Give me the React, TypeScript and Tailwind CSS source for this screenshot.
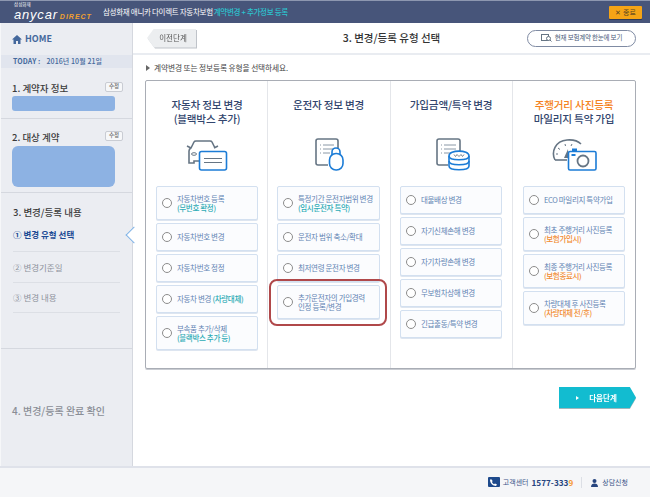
const FONT = "font-['Noto_Sans_CJK_KR','Noto_Sans',sans-serif]";

type Opt = { a: string; b?: string; inline?: string; h: string; tone?: string; highlight?: boolean };

const teal = "text-[#2cabb5]";
const orange = "text-[#f28b2e]";

function Option({ o }: { o: Opt }) {
  return (
    <div className={`relative flex items-center gap-[5px] rounded-[2px] border border-[#d3e0f0] bg-[#fbfcfe] pl-[5px] shadow-[0_1px_0_#dde5f0] ${o.h}`}>
      <span className="h-[10px] w-[10px] shrink-0 rounded-full border border-[#8c8c8c] bg-white" />
      <div className="text-[7.5px] leading-[9.5px] tracking-[-0.35px] text-[#5f83b3]">
        <div className="whitespace-nowrap">
          {o.a}
          {o.inline && <span className={`font-medium ${teal}`}> {o.inline}</span>}
        </div>
        {o.b && <div className={`whitespace-nowrap font-medium ${o.tone ?? teal}`}>{o.b}</div>}
      </div>
      {o.highlight && <div className="absolute -bottom-[8px] -left-[9px] -right-[8px] -top-[7px] rounded-[8px] border-2 border-[#b0484a]" />}
    </div>
  );
}

function CarIcon() {
  return (
    <svg width="42" height="31" viewBox="0 0 42 31" fill="none">
      <path d="M3 21V11q0-2 2-3l3-6q.5-1 2-1h14q1.500 0 2 1l3 6M1 6l4 2M32 6l-4 2M3 21v2h5v-2h5" stroke="#667584" strokeWidth="1.6" />
      <ellipse cx="8" cy="14" rx="2.500" ry="1.300" stroke="#667584" strokeWidth="1" />
      <rect x="13.500" y="11.500" width="27" height="18.500" rx="2" fill="#fff" stroke="#1c7cd6" strokeWidth="1.6" />
      <path d="M18 18.500h18M18 22.500h18" stroke="#667584" strokeWidth="1" />
    </svg>
  );
}

function DocLockIcon() {
  return (
    <svg className="ml-[3px]" width="30" height="33" viewBox="0 0 30 33" fill="none">
      <path d="M13 27H3a2 2 0 0 1-2-2V3a2 2 0 0 1 2-2h18a2 2 0 0 1 2 2v8" stroke="#667584" strokeWidth="1.6" />
      <path d="M5 7h1M8 7h11M5 11h1M8 11h11M5 15h1M8 15h7" stroke="#8a98a6" strokeWidth="1" />
      <path d="M17 17v-3a4 4 0 0 1 8 0v3" stroke="#1c7cd6" strokeWidth="1.6" />
      <rect x="14.500" y="15.500" width="13.500" height="16.500" rx="6.500" fill="#fff" stroke="#1c7cd6" strokeWidth="1.6" />
    </svg>
  );
}

function DocCoinIcon() {
  return (
    <svg className="ml-[3px]" width="34" height="33" viewBox="0 0 34 33" fill="none">
      <path d="M12 27H3a2 2 0 0 1-2-2V3a2 2 0 0 1 2-2h19a2 2 0 0 1 2 2v10" stroke="#667584" strokeWidth="1.6" />
      <path d="M5 7h1M8 7h12M5 11h1M8 11h12M5 15h1M8 15h8" stroke="#8a98a6" strokeWidth="1" />
      <path d="M13 18c0-6.500 20-6.500 20 0v10c0 5-20 5-20 0z" fill="#fff" stroke="#1c7cd6" strokeWidth="1.6" />
      <path d="M13 18c0 5 20 5 20 0M13 23c0 5 20 5 20 0" stroke="#1c7cd6" strokeWidth="1.6" />
      <path d="M18 16.500l1.500 2 1.500-2 2 2 2-2 1.500 2 1.500-2" stroke="#667584" strokeWidth="0.9" />
    </svg>
  );
}

function GaugeCameraIcon() {
  return (
    <svg width="45" height="32" viewBox="0 0 45 32" fill="none">
      <path d="M3 21C-1 13 3 2 15 1c6-.5 11 1 14 4" stroke="#667584" strokeWidth="1.600" />
      <path d="M3 21h12" stroke="#667584" strokeWidth="1.600" />
      <path d="M6 9l2 1.500M13 5l.5 2M20 5l-1 2M4 15h2" stroke="#667584" strokeWidth="1" />
      <path d="M12 19l4-9 .5 9z" fill="#667584" />
      <rect x="16.500" y="12.500" width="27.500" height="18.500" rx="1.500" fill="#fff" stroke="#1c7cd6" strokeWidth="1.600" />
      <rect x="20" y="9.500" width="5" height="3" fill="#1c7cd6" />
      <rect x="19.500" y="15" width="4" height="2" fill="#1c7cd6" />
      <circle cx="31" cy="22" r="5.500" stroke="#667584" strokeWidth="1.800" />
    </svg>
  );
}

const columns = [
  {
    cls: "pl-[10px] pr-[9px] border-r border-[#e4e6ea]",
    title: (<>자동차 정보 변경<br />(블랙박스 추가)</>),
    icon: <CarIcon />,
    opts: [
      { a: "자동차번호 등록", b: "(무번호 확정)", h: "h-[34px]" },
      { a: "자동차번호 변경", h: "h-[28px]" },
      { a: "자동차번호 정정", h: "h-[28px]" },
      { a: "자동차 변경", inline: "(차량대체)", h: "h-[28px]" },
      { a: "부속품 추가/삭제", b: "(블랙박스 추가 등)", h: "h-[34px]" },
    ] as Opt[],
  },
  {
    cls: "pl-[9px] pr-[10px] border-r border-[#e4e6ea]",
    title: <>운전자 정보 변경</>,
    icon: <DocLockIcon />,
    opts: [
      { a: "특정기간 운전자범위 변경", b: "(임시운전자 특약)", h: "h-[34px]" },
      { a: "운전자 범위 축소/확대", h: "h-[28px]" },
      { a: "최저연령 운전자 변경", h: "h-[28px]" },
      { a: "추가운전자의 가입경력", b: "인정 등록/변경", tone: "text-[#5f83b3] font-normal", h: "h-[34px]", highlight: true },
    ] as Opt[],
  },
  {
    cls: "pl-[9px] pr-[10px] border-r border-[#e4e6ea]",
    title: <>가입금액/특약 변경</>,
    icon: <DocCoinIcon />,
    opts: [
      { a: "대물배상 변경", h: "h-[28px]" },
      { a: "자기신체손해 변경", h: "h-[28px]" },
      { a: "자기차량손해 변경", h: "h-[28px]" },
      { a: "무보험차상해 변경", h: "h-[28px]" },
      { a: "긴급출동/특약 변경", h: "h-[28px]" },
    ] as Opt[],
  },
  {
    cls: "pl-[10px] pr-[10px]",
    title: (<><span className="text-[#f58220]">주행거리 사진등록</span><br />마일리지 특약 가입</>),
    icon: <GaugeCameraIcon />,
    opts: [
      { a: "ECO 마일리지 특약가입", h: "h-[28px]" },
      { a: "최초 주행거리 사진등록", b: "(보험가입시)", tone: orange, h: "h-[34px]" },
      { a: "최종 주행거리 사진등록", b: "(보험종료시)", tone: orange, h: "h-[34px]" },
      { a: "차량대체 후 사진등록", b: "(차량대체 전/후)", tone: orange, h: "h-[34px]" },
    ] as Opt[],
  },
];

function Edit() {
  return (
    <span className="mt-[1px] flex h-[10px] w-[18px] items-center justify-center rounded-[2px] border border-[#c9ccd3] bg-[#f6f7f9] text-[5.5px] leading-none text-[#666]">수정</span>
  );
}

export default function App() {
  return (
    <div className={`${FONT} flex h-[497px] w-[650px] flex-col overflow-hidden bg-white`}>
      <header className="flex h-[23px] shrink-0 items-center border-t border-t-[#8d97b0] bg-[#47557a] pl-[14px] pr-[8px]">
        <div className="flex w-[89px] flex-col gap-[1px] text-white">
          <span className="text-[4.5px] leading-[6px]">삼성화재</span>
          <span className="whitespace-nowrap font-['Liberation_Sans',sans-serif] text-[13px] leading-[14px] italic tracking-[0.8px]">anycar<span className="ml-[2px] text-[7px] font-bold tracking-[1px] text-[#f0a030]">DIRECT</span></span>
        </div>
        <span className="whitespace-nowrap text-[7.5px] tracking-[-0.3px] text-white">삼성화재 애니카 다이렉트 자동차보험</span>
        <span className="ml-[1px] whitespace-nowrap text-[7.5px] font-medium tracking-[-0.3px] text-[#2cc4cf]">계약변경 + 추가정보 등록</span>
        <div className="ml-auto flex h-[13px] w-[33px] items-center justify-center gap-[2px] rounded-[1px] bg-[#f5a416] text-[7px] leading-none text-[#5a4420] shadow-[0_1px_0_#2f3a55]">
          <span>✕</span><span>종료</span>
        </div>
      </header>

      <div className="flex min-h-0 flex-1">
        <aside className="flex w-[133px] shrink-0 flex-col border-l border-r border-l-[#f6f7f9] border-r-[#d5d8df] bg-[#ebedf2]">
          <div className="flex h-[32px] shrink-0 items-center gap-[3px] pl-[11px] text-[9px] font-bold text-[#44689c]">
            <svg width="10" height="9" viewBox="0 0 10 9"><path d="M5 0 0 4.500h1.500V9h2.500V6h2v3h2.500V4.500H10z" fill="#44689c" /></svg>
            <span>HOME</span>
          </div>
          <div className="flex h-[13px] shrink-0 items-center bg-[#e1e5ee] pl-[12px] text-[7px] font-bold tracking-[0.1px] text-[#44689c]">
            <span>TODAY :</span><span className="ml-[6px] font-medium">2016년 10월 21일</span>
          </div>
          <section className="h-[51px] shrink-0 border-b border-[#d5d8df] pl-[11px] pr-[9px] pt-[13px]">
            <div className="flex items-start justify-between text-[9.5px] font-medium leading-[14px] text-[#3a3a3a]"><span>1. 계약자 정보</span><Edit /></div>
            <div className="mt-[1px] h-[15px] w-[103px] rounded-[3px] bg-[#8db2e3]" />
          </section>
          <section className="h-[74px] shrink-0 border-b border-[#d5d8df] pl-[11px] pr-[9px] pt-[11px]">
            <div className="flex items-start justify-between text-[9.5px] font-medium leading-[14px] text-[#3a3a3a]"><span>2. 대상 계약</span><Edit /></div>
            <div className="mt-[2px] h-[41px] w-[103px] rounded-[6px] bg-[#8db2e3]" />
          </section>
          <section className="relative h-[156px] shrink-0 border-b border-[#d5d8df] px-[12px] pt-[12px]">
            <div className="text-[9.5px] font-medium leading-[14px] text-[#3a3a3a]">3. 변경/등록 내용</div>
            <div className="mt-[7px] flex h-[26px] items-start border-b border-[#dcdfe5] pt-[3px] text-[8.5px] font-bold leading-[11px] text-[#1c4a94]">① 변경 유형 선택</div>
            <div className="flex h-[31px] items-center border-b border-[#dcdfe5] text-[8.5px] leading-[11px] text-[#8d929c]">② 변경기준일</div>
            <div className="flex h-[30px] items-center border-b border-[#dcdfe5] text-[8.5px] leading-[11px] text-[#8d929c]">③ 변경 내용</div>
            <div className="absolute right-[-2px] top-[36px] h-[12px] w-[12px] translate-x-[6px] rotate-45 border-b border-l border-[#7fb2e6] bg-white" />
          </section>
          <div className="pl-[11px] pt-[55px] text-[10px] font-medium leading-[14px] text-[#8a8e96]">4. 변경/등록 완료 확인</div>
        </aside>

        <main className="flex min-w-0 flex-1 flex-col">
          <div className="grid h-[32px] shrink-0 grid-cols-[1fr_auto_1fr] items-center border-b-2 border-[#e9ecf1] pl-[14px] pr-[14px]">
            <div className="w-[50px] drop-shadow-[1px_1px_0_#bfc3c9]">
              <div className="flex h-[19px] w-[49px] items-center justify-center bg-[#eceef0] pl-[3px] text-[7.5px] text-[#555] [clip-path:polygon(7px_0,100%_0,100%_100%,7px_100%,0_50%)]">
                이전단계
              </div>
            </div>
            <div className="text-[10.5px] font-medium text-[#333]">3. 변경/등록 유형 선택</div>
            <div className="flex h-[17px] w-[109px] items-center justify-center gap-[3px] justify-self-end rounded-full border border-[#7f8ba3] bg-white text-[6.5px] tracking-[-0.2px] text-[#4a5a78]">
              <svg width="11" height="8" viewBox="0 0 11 8" fill="none"><rect x="0.500" y="0.500" width="7" height="6" stroke="#667584" /><circle cx="7.500" cy="4.500" r="2" stroke="#667584" fill="#fff" /><path d="M9 6l1.500 1.500" stroke="#667584" /></svg>
              현재 보험계약 한눈에 보기
            </div>
          </div>

          <div className="flex min-h-0 flex-1 flex-col pl-[12px] pr-[14px]">
            <div className="flex h-[25px] shrink-0 items-center gap-[4px] pl-[1px] text-[7.7px] tracking-[-0.1px] text-[#444]">
              <span className="h-0 w-0 border-y-[3px] border-l-[4px] border-y-transparent border-l-[#666]" />
              계약변경 또는 정보등록 유형을 선택하세요.
            </div>
            <div className="grid h-[289px] shrink-0 grid-cols-[122px_123px_122px_1fr] rounded-[2px] border border-[#a9adb5] shadow-[0_1px_0_#c9ccd2]">
              {columns.map((c, i) => (
                <div key={i} className={`flex flex-col ${c.cls}`}>
                  <div className="flex h-[40px] items-start justify-center pt-[17px] text-center">
                    <div className="whitespace-nowrap text-[10.6px] font-medium leading-[14px] tracking-[-0.2px] text-[#33466e]">{c.title}</div>
                  </div>
                  <div className="flex h-[50px] items-end justify-center">{c.icon}</div>
                  <div className="mt-[15px] flex flex-col gap-[3px]">
                    {c.opts.map((o, j) => <Option key={j} o={o} />)}
                  </div>
                </div>
              ))}
            </div>
            <div className="mt-[18px] flex shrink-0 justify-end">
              <div className="drop-shadow-[0_1px_0_#9fb6bb]">
                <div className="flex h-[21px] w-[77px] items-center justify-center gap-[10px] bg-[#12bcd0] pr-[2px] text-[7.5px] font-bold text-white [clip-path:polygon(0_0,92%_0,100%_50%,92%_100%,0_100%)]">
                  <span className="h-0 w-0 border-y-[2.500px] border-l-[3px] border-y-transparent border-l-white" />
                  다음단계
                </div>
              </div>
            </div>
          </div>
        </main>
      </div>

      <footer className="flex h-[31px] shrink-0 items-center justify-end gap-[8px] border-t-2 border-[#dfe2ea] bg-[#f5f6f8] pr-[22px]">
        <div className="flex items-center gap-[3px] text-[7px] text-[#3c5488]">
          <span className="flex h-[10px] w-[12px] items-center justify-center rounded-[1px] bg-[#1e4a8c] text-white">
            <svg width="7" height="7" viewBox="0 0 7 7"><path d="M1 0 0 1c0 3 3 6 6 6l1-1.500-2-1-1 .7C3 4.500 2.500 4 2 3l.7-1z" fill="#fff" /></svg>
          </span>
          <span>고객센터</span>
          <span className="text-[8.2px] font-bold text-[#27457f]">1577-333<span className="text-[#f59a3a]">9</span></span>
        </div>
        <div className="h-[11px] w-px bg-[#dcdfe5]" />
        <div className="ml-[1px] flex items-center gap-[4px] text-[7px] text-[#3c5488]">
          <svg width="7" height="8" viewBox="0 0 7 8"><circle cx="3.500" cy="2" r="2" fill="#27457f" /><path d="M0 8c0-2.500 1.500-3.500 3.500-3.500S7 5.500 7 8z" fill="#27457f" /></svg>
          <span>상담신청</span>
        </div>
      </footer>
    </div>
  );
}
